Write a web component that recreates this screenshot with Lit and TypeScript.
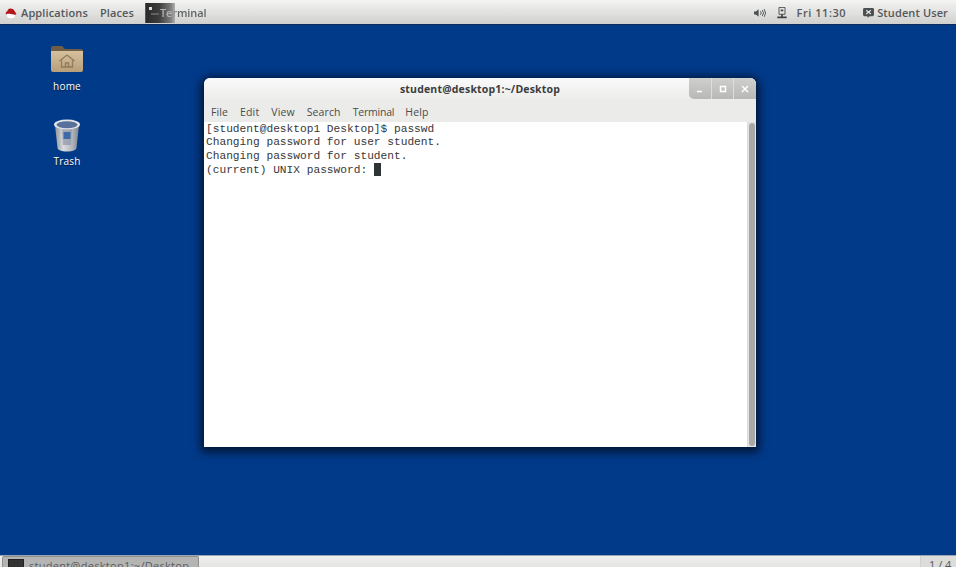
import { LitElement, html, css } from "lit";
import { customElement } from "lit/decorators.js";

@customElement("app-root")
export class AppRoot extends LitElement {
  static styles = css`
    :host { display: block; width: 956px; height: 567px; overflow: hidden; }
    * { box-sizing: border-box; }
    .screen {
      position: relative; width: 956px; height: 567px; display: flex; flex-direction: column;
      background: #023a8a; font-family: "Open Sans", "Noto Sans", sans-serif; overflow: hidden;
    }
    .top {
      height: 25px; flex: none; display: flex; align-items: center; padding: 3px 0 2px 5px;
      background: linear-gradient(#f4f4f3 0, #e9e9e8 30%, #d0d0cf 100%);
      border-bottom: 1px solid #0d2a58;
      font-size: 11px; font-weight: 600; color: #55585a; letter-spacing: .12px; position: relative; z-index: 2;
    }
    .hat { width: 12px; height: 12px; margin-right: 4px; flex: none; }
    .places { margin-left: 12px; }
    .task {
      margin-left: 11px; position: relative; width: 62px; height: 20px; display: flex; align-items: center;
    }
    .thumb {
      position: absolute; left: 0; top: 0; width: 30px; height: 20px;
      background: linear-gradient(90deg, #2a2a2a 0, #3c3c3c 45%, #7c7c7c 85%, #b0b0af 100%);
      border-left: 1px solid #555;
    }
    .thumb::before { content: ""; position: absolute; left: 3px; top: 4px; width: 3px; height: 3px; background: #ddd; }
    .thumb::after { content: ""; position: absolute; left: 5px; top: 10px; width: 8px; height: 2px; background: #606060; }
    .task-label {
      position: relative; margin-left: 15px; letter-spacing: -.1px;
      background: linear-gradient(90deg, #b4b4b4 0, #b4b4b4 12px, #5c5f60 17px, #5c5f60 100%);
      -webkit-background-clip: text; background-clip: text; color: transparent;
    }
    .spacer { flex: 1; }
    .tray { display: flex; align-items: center; padding-right: 8px; }
    .tray svg { flex: none; }
    .vol { margin-right: 11px; }
    .net { margin-right: 10px; }
    .clock { margin-right: 17px; letter-spacing: .55px; }
    .ua { margin-right: 3px; }

    .desk-item {
      position: absolute; left: 37px; width: 60px; display: flex; flex-direction: column; align-items: center;
      color: #fff; font-size: 10px; letter-spacing: .2px; text-shadow: 0 1px 1px #0009;
    }
    .home { top: 42px; gap: 5px; }
    .trash { top: 118px; gap: 2px; }

    .win {
      position: absolute; left: 204px; top: 78px; width: 552px; height: 369px; display: flex; flex-direction: column;
      border-radius: 6px 6px 0 0; background: #e9e9e8; box-shadow: 0 2px 10px 3px #000a; overflow: hidden;
    }
    .title {
      height: 22px; flex: none; display: flex; align-items: center; justify-content: center; position: relative;
      background: linear-gradient(#fafafa, #ececeb); font-size: 10.5px; font-weight: 700; color: #3b3d3e;
      letter-spacing: .18px;
    }
    .btns {
      position: absolute; right: 0; top: 0; height: 21px; width: 67px; display: flex;
      background: linear-gradient(#cfcfce, #b8b8b7); border-radius: 0 0 0 5px;
    }
    .btn { flex: 1; display: flex; align-items: center; justify-content: center; border-left: 1px solid #dedede; }
    .btn:first-child { border-left: 0; }
    .menu {
      height: 22px; flex: none; display: flex; align-items: center; gap: 12px; padding: 1px 0 0 7px;
      font-size: 10.5px; color: #4a4c4d; letter-spacing: .12px; background: #ebebea;
    }
    .menu .narrow { letter-spacing: -.2px; margin-right: -1px; }
    .body { flex: 1; display: flex; min-height: 0; }
    .term {
      flex: 1; background: #fff; margin: 0; padding: 1px 0 0 2px;
      font: 11.2px/13.4px "Liberation Mono", monospace; color: #383838; white-space: pre;
    }
    .cursor { display: inline-block; width: 7px; height: 13px; background: #2e3436; vertical-align: -3px; }
    .scroll { width: 9px; flex: none; background: #e4e4e3; padding: 1px; display: flex; border-left: 1px solid #dcdcdb; }
    .thumbbar { flex: 1; background: #a8a8a7; border-radius: 3px; }

    .bottom {
      position: absolute; left: 0; right: 0; top: 555px; height: 12px; display: flex;
      background: linear-gradient(#f0f0ef, #e4e4e3); border-top: 1px solid #9aa4b4;
      font-size: 11px; color: #555;
    }
    .wlist {
      margin-left: 2px; width: 197px; background: #b4b4b3; border: 1px solid #8f8f8e; border-bottom: 0;
      border-radius: 2px 2px 0 0; display: flex; gap: 5px; padding: 2px 0 0 5px; color: #5a5c5d; letter-spacing: .3px;
      line-height: 14px; white-space: nowrap; overflow: hidden;
    }
    .wicon { width: 16px; height: 11px; background: #333; border: 1px solid #222; flex: none; }
    .pager { margin-left: auto; width: 36px; background: #dcdcdb; border-left: 1px solid #d0d0cf; padding: 2px 0 0 8px; line-height: 14px; white-space: nowrap; overflow: hidden; }
  `;

  render() {
    return html`<div class="screen">
      <div class="top">
        <svg class="hat" viewBox="0 0 12 12">
          <ellipse cx="6" cy="8.6" rx="4" ry="2.6" fill="#fff"/>
          <path d="M.6 6.8C1 4.8 2 4.6 2.6 3.6 3.3 2 4.3 1.3 5.6 1.6c1.2.3 2.7.3 3.3 1.4.6 1.2 2 2.7 2.4 3.8.2 1-1 1-2.5.7C6.700 7 3.400 6.500 2.600 6.700 1.900 7 1 7.600.6 6.800z" fill="#b5161b"/>
        </svg>
        <span>Applications</span>
        <span class="places">Places</span>
        <div class="task"><div class="thumb"></div><span class="task-label">Terminal</span></div>
        <div class="spacer"></div>
        <div class="tray">
          <svg class="vol" width="12" height="10" viewBox="0 0 13 10" fill="none" stroke="#4c4f50">
            <path d="M0 3.500h2L5 1v8L2 6.500H0z" fill="#4c4f50" stroke="none"/>
            <path d="M7 3a3 3 0 0 1 0 4M9 1.800a5 5 0 0 1 0 6.400M11 .8a7 7 0 0 1 0 8.400" stroke-width="1"/>
          </svg>
          <svg class="net" width="10" height="12" viewBox="0 0 11 14">
            <path d="M2 .5h7v8H2z" fill="#e4e4e3" stroke="#404344"/>
            <path d="M4 3h3v2H4z" fill="#404344"/>
            <path d="M4.500 8.500h2V11h-2zM0 11h11v2H0z" fill="#404344"/>
          </svg>
          <span class="clock">Fri 11:30</span>
          <svg class="ua" width="11" height="10" viewBox="0 0 12 11">
            <path d="M1.500 0h9A1.500 1.500 0 0 1 12 1.500v6A1.500 1.500 0 0 1 10.500 9H7l-2 2V9H1.500A1.500 1.500 0 0 1 0 7.500v-6A1.500 1.500 0 0 1 1.500 0z" fill="#4c4f50"/>
            <path d="M3.500 2.500l5 4M8.500 2.500l-5 4" stroke="#e4e4e3" stroke-width="1.400"/>
          </svg>
          <span>Student User</span>
        </div>
      </div>

      <div class="desk-item home">
        <svg width="34" height="32" viewBox="0 0 34 32">
          <defs>
            <linearGradient id="folder" x1="0" y1="0" x2="0" y2="1"><stop offset="0" stop-color="#d6c09d"/><stop offset="1" stop-color="#b89f7a"/></linearGradient>
            <linearGradient id="can" x1="0" y1="0" x2="1" y2="0"><stop offset="0" stop-color="#8f959c"/><stop offset=".35" stop-color="#d9dcdf"/><stop offset=".7" stop-color="#b3b8be"/><stop offset="1" stop-color="#7f858d"/></linearGradient>
          </defs>
          <path d="M1 6a2 2 0 0 1 2-2h9l3 3h16a2 2 0 0 1 2 2v8H1z" fill="#6f5d45"/>
          <path d="M1 9h32v19a2 2 0 0 1-2 2H3a2 2 0 0 1-2-2z" fill="url(#folder)"/>
          <path d="M9.500 19L17 13l7.500 6M11.500 18.500V25h11v-6.500M15.500 25v-4h3v4" fill="none" stroke="#8f7b5e" stroke-width="1.300"/>
        </svg>
        <span>home</span>
      </div>
      <div class="desk-item trash">
        <svg width="30" height="34" viewBox="0 0 30 34">
          <path d="M3 7l2.500 23c.3 2 4 3.500 9.500 3.500s9.200-1.500 9.500-3.500L27 7z" fill="url(#can)"/>
          <path d="M10 9l1 18h8l1-18z" fill="#8d97a8" opacity=".7"/>
          <path d="M11.500 14h7v7h-7z" fill="#3f6aa8"/>
          <ellipse cx="15" cy="6.500" rx="13" ry="5" fill="#e2e4e7"/>
          <ellipse cx="15" cy="6.800" rx="10.500" ry="3.500" fill="#58709a"/>
        </svg>
        <span>Trash</span>
      </div>

      <div class="win">
        <div class="title">student@desktop1:~/Desktop
          <div class="btns">
            <div class="btn"><svg width="8" height="8" viewBox="0 0 8 8"><path d="M1 6.500h5" stroke="#fff" stroke-width="1.500"/></svg></div>
            <div class="btn"><svg width="8" height="8" viewBox="0 0 8 8"><path d="M1.500 1.500h5v5h-5z" fill="none" stroke="#fff" stroke-width="1.500"/></svg></div>
            <div class="btn"><svg width="8" height="8" viewBox="0 0 8 8"><path d="M1 1l6 6M7 1l-6 6" stroke="#fff" stroke-width="1.500"/></svg></div>
          </div>
        </div>
        <div class="menu"><span>File</span><span>Edit</span><span>View</span><span>Search</span><span class="narrow">Terminal</span><span>Help</span></div>
        <div class="body">
          <pre class="term">[student@desktop1 Desktop]$ passwd
Changing password for user student.
Changing password for student.
(current) UNIX password: <span class="cursor"></span></pre>
          <div class="scroll"><div class="thumbbar"></div></div>
        </div>
      </div>

      <div class="bottom">
        <div class="wlist"><div class="wicon"></div><span>student@desktop1:~/Desktop</span></div>
        <div class="pager">1 / 4</div>
      </div>
    </div>`;
  }
}
